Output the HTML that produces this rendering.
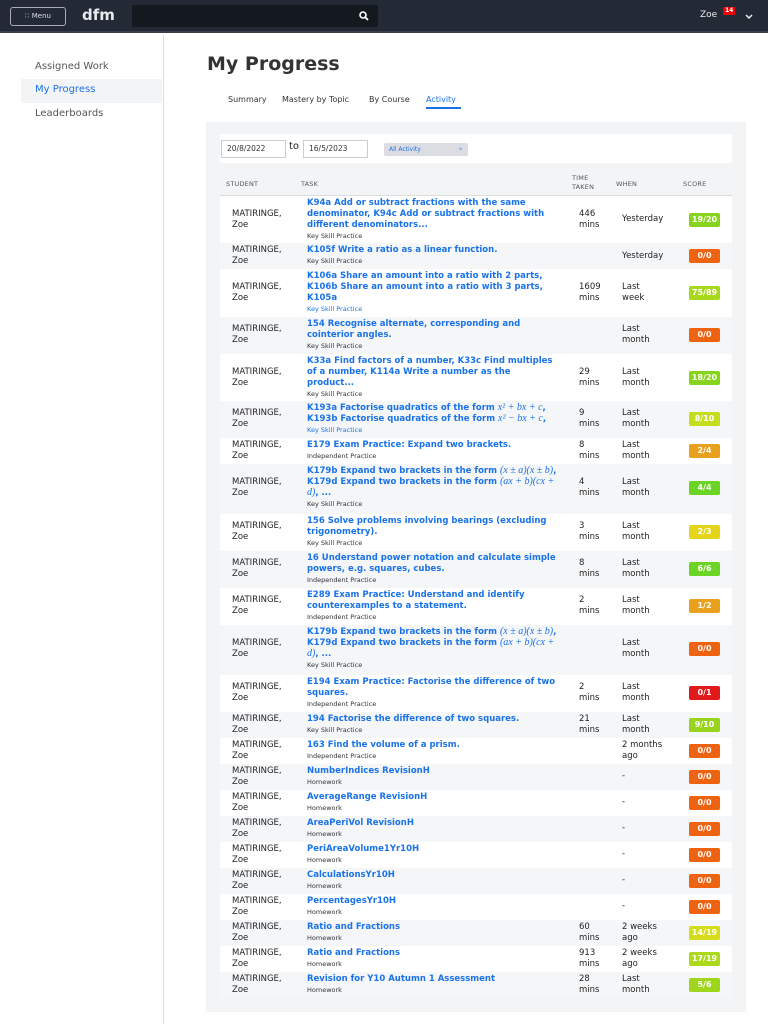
<!DOCTYPE html>
<html><head><meta charset="utf-8"><style>
*{margin:0;padding:0;box-sizing:border-box}
body{width:768px;height:1024px;overflow:hidden;background:#fff;font-family:"DejaVu Sans","Liberation Sans",sans-serif;color:#222;position:relative}
.top{position:absolute;left:0;top:0;width:768px;height:33px;background:#232a36;border-bottom:2px solid #3a3f48}
.menu{position:absolute;left:10px;top:7px;width:56px;height:19px;border:1px solid #aab;border-radius:3px;color:#dde;font-size:7px;line-height:17px;text-align:center}
.logo{position:absolute;left:82px;top:6px;color:#e8eaee;font-size:15px;font-weight:bold}
.search{position:absolute;left:132px;top:5px;width:246px;height:22px;background:#14181f;border-radius:2px}
.zoe{position:absolute;left:700px;top:10px;color:#eee;font-size:9px}
.badge14{position:absolute;left:723px;top:7px;background:#e00;color:#fff;font-size:6px;padding:0 2px;line-height:8px;font-weight:bold}
.side{position:absolute;left:163px;top:35px;width:1px;height:989px;background:#ddd}
.nav{position:absolute;left:35px;font-size:10px;color:#555}
.navsel{position:absolute;left:21px;top:79px;width:141px;height:24px;background:#f3f4f6}
h1{position:absolute;left:207px;top:53px;font-size:19px;color:#333;font-weight:bold}
.tab{position:absolute;top:95px;font-size:8px;color:#333}
.panel{position:absolute;left:206px;top:122px;width:540px;height:890px;background:#f3f4f6}
.filt{position:absolute;left:220px;top:134px;width:512px;height:29px;background:#fff}
.inp{position:absolute;top:140px;width:65px;height:18px;border:1px solid #ccc;font-size:7.5px;line-height:16px;padding-left:5px;color:#333;background:#fff}
.th{position:absolute;font-size:6.5px;color:#555;letter-spacing:.2px}
.row{position:absolute;left:220px;width:512px}
.row.g{background:#f5f6f8}
.row.w{background:#fff}
.st{position:absolute;left:12px;font-size:8.5px;line-height:11px;color:#222}
.tk{position:absolute;left:87px;font-size:8.5px;line-height:11px;color:#1a73e8;font-weight:bold;width:255px}
.tk small{display:block;font-size:6.5px;line-height:11px;color:#333;font-weight:normal}
.tk small.b{color:#1a73e8}
.m{font-family:"Liberation Serif",serif;font-style:italic;font-weight:normal;font-size:10px;line-height:10px}
.tm{position:absolute;left:359px;font-size:8.5px;line-height:11px;color:#222}
.wh{position:absolute;left:402px;font-size:8.5px;line-height:11px;color:#222}
.sc{position:absolute;left:469px;width:31px;height:14px;border-radius:2px;color:#fff;font-size:8px;font-weight:bold;text-align:center;line-height:14px}
</style></head><body>
<div class="top">
<div class="menu">∷ Menu</div>
<div class="logo">dfm</div>
<div class="search"><svg style="position:absolute;left:227px;top:6px" width="10" height="10" viewBox="0 0 10 10"><circle cx="4" cy="4" r="3" stroke="#fff" stroke-width="1.6" fill="none"/><path d="M6.3 6.3L9 9" stroke="#fff" stroke-width="1.8"/></svg></div>
<div class="zoe">Zoe</div><div class="badge14">14</div>
<svg style="position:absolute;left:745px;top:14px" width="8" height="6" viewBox="0 0 8 6"><path d="M1 1l3 3 3-3" stroke="#eee" stroke-width="1.5" fill="none"/></svg>
</div>
<div class="side"></div>
<div class="navsel"></div>
<div class="nav" style="top:61px">Assigned Work</div>
<div class="nav" style="top:84px;color:#1a73e8">My Progress</div>
<div class="nav" style="top:108px">Leaderboards</div>
<h1>My Progress</h1>
<div class="tab" style="left:228px">Summary</div>
<div class="tab" style="left:282px">Mastery by Topic</div>
<div class="tab" style="left:369px">By Course</div>
<div class="tab" style="left:426px;color:#1a73e8">Activity</div>
<div style="position:absolute;left:426px;top:107px;width:35px;height:2px;background:#1a73e8"></div>
<div class="panel"></div>
<div class="filt"></div>
<div class="inp" style="left:221px">20/8/2022</div>
<div style="position:absolute;left:289px;top:141px;font-size:10px">to</div>
<div class="inp" style="left:303px">16/5/2023</div>
<div style="position:absolute;left:384px;top:143px;width:84px;height:13px;background:#dcdde2;border-radius:2px;font-size:6px;color:#1a73e8;line-height:13px;padding-left:5px">All Activity<span style="position:absolute;right:5px">⚬</span></div>
<div class="th" style="left:226px;top:180px">STUDENT</div>
<div class="th" style="left:301px;top:180px">TASK</div>
<div class="th" style="left:572px;top:174px;line-height:9px">TIME<br>TAKEN</div>
<div class="th" style="left:616px;top:180px">WHEN</div>
<div class="th" style="left:683px;top:180px">SCORE</div>
<div style="position:absolute;left:220px;top:195px;width:512px;height:1px;background:#ddd"></div>

<div class="row w" style="top:196px;height:47px"><div class="st" style="top:13px">MATIRINGE,<br>Zoe</div><div class="tk" style="top:2px;width:245px">K94a Add or subtract fractions with the same denominator, K94c Add or subtract fractions with different denominators...<small>Key Skill Practice</small></div><div class="tm" style="top:13px">446<br>mins</div><div class="wh" style="top:18px">Yesterday</div><div class="sc" style="top:17px;background:#86d41c">19/20</div></div>
<div class="row g" style="top:243px;height:26px"><div class="st" style="top:2px">MATIRINGE,<br>Zoe</div><div class="tk" style="top:2px">K105f Write a ratio as a linear function.<small>Key Skill Practice</small></div><div class="wh" style="top:8px">Yesterday</div><div class="sc" style="top:6px;background:#ee6311">0/0</div></div>
<div class="row w" style="top:269px;height:48px"><div class="st" style="top:13px">MATIRINGE,<br>Zoe</div><div class="tk" style="top:2px">K106a Share an amount into a ratio with 2 parts, K106b Share an amount into a ratio with 3 parts, K105a<small class="b">Key Skill Practice</small></div><div class="tm" style="top:13px">1609<br>mins</div><div class="wh" style="top:13px">Last<br>week</div><div class="sc" style="top:17px;background:#a6d81c">75/89</div></div>
<div class="row g" style="top:317px;height:37px"><div class="st" style="top:7px">MATIRINGE,<br>Zoe</div><div class="tk" style="top:2px">154 Recognise alternate, corresponding and cointerior angles.<small>Key Skill Practice</small></div><div class="wh" style="top:7px">Last<br>month</div><div class="sc" style="top:11px;background:#ee6311">0/0</div></div>
<div class="row w" style="top:354px;height:47px"><div class="st" style="top:13px">MATIRINGE,<br>Zoe</div><div class="tk" style="top:2px;width:250px">K33a Find factors of a number, K33c Find multiples of a number, K114a Write a number as the product...<small>Key Skill Practice</small></div><div class="tm" style="top:13px">29<br>mins</div><div class="wh" style="top:13px">Last<br>month</div><div class="sc" style="top:17px;background:#86d41c">18/20</div></div>
<div class="row g" style="top:401px;height:37px"><div class="st" style="top:7px">MATIRINGE,<br>Zoe</div><div class="tk" style="top:2px;width:270px">K193a Factorise quadratics of the form <span class="m">x² + bx + c</span>, K193b Factorise quadratics of the form <span class="m">x² − bx + c</span>,<small class="b">Key Skill Practice</small></div><div class="tm" style="top:7px">9<br>mins</div><div class="wh" style="top:7px">Last<br>month</div><div class="sc" style="top:11px;background:#c4dd1c">8/10</div></div>
<div class="row w" style="top:438px;height:26px"><div class="st" style="top:2px">MATIRINGE,<br>Zoe</div><div class="tk" style="top:2px">E179 Exam Practice: Expand two brackets.<small>Independent Practice</small></div><div class="tm" style="top:2px">8<br>mins</div><div class="wh" style="top:2px">Last<br>month</div><div class="sc" style="top:6px;background:#e9a01c">2/4</div></div>
<div class="row g" style="top:464px;height:50px"><div class="st" style="top:13px">MATIRINGE,<br>Zoe</div><div class="tk" style="top:2px;width:250px">K179b Expand two brackets in the form <span class="m">(x ± a)(x ± b)</span>, K179d Expand two brackets in the form <span class="m">(ax + b)(cx + d)</span>, ...<small>Key Skill Practice</small></div><div class="tm" style="top:13px">4<br>mins</div><div class="wh" style="top:13px">Last<br>month</div><div class="sc" style="top:17px;background:#6bd424">4/4</div></div>
<div class="row w" style="top:514px;height:37px"><div class="st" style="top:7px">MATIRINGE,<br>Zoe</div><div class="tk" style="top:2px">156 Solve problems involving bearings (excluding trigonometry).<small>Key Skill Practice</small></div><div class="tm" style="top:7px">3<br>mins</div><div class="wh" style="top:7px">Last<br>month</div><div class="sc" style="top:11px;background:#e4d41a">2/3</div></div>
<div class="row g" style="top:551px;height:37px"><div class="st" style="top:7px">MATIRINGE,<br>Zoe</div><div class="tk" style="top:2px;width:270px">16 Understand power notation and calculate simple powers, e.g. squares, cubes.<small>Independent Practice</small></div><div class="tm" style="top:7px">8<br>mins</div><div class="wh" style="top:7px">Last<br>month</div><div class="sc" style="top:11px;background:#6bd424">6/6</div></div>
<div class="row w" style="top:588px;height:37px"><div class="st" style="top:7px">MATIRINGE,<br>Zoe</div><div class="tk" style="top:2px">E289 Exam Practice: Understand and identify counterexamples to a statement.<small>Independent Practice</small></div><div class="tm" style="top:7px">2<br>mins</div><div class="wh" style="top:7px">Last<br>month</div><div class="sc" style="top:11px;background:#e9a01c">1/2</div></div>
<div class="row g" style="top:625px;height:50px"><div class="st" style="top:13px">MATIRINGE,<br>Zoe</div><div class="tk" style="top:2px;width:250px">K179b Expand two brackets in the form <span class="m">(x ± a)(x ± b)</span>, K179d Expand two brackets in the form <span class="m">(ax + b)(cx + d)</span>, ...<small>Key Skill Practice</small></div><div class="wh" style="top:13px">Last<br>month</div><div class="sc" style="top:17px;background:#ee6311">0/0</div></div>
<div class="row w" style="top:675px;height:37px"><div class="st" style="top:7px">MATIRINGE,<br>Zoe</div><div class="tk" style="top:2px;width:270px">E194 Exam Practice: Factorise the difference of two squares.<small>Independent Practice</small></div><div class="tm" style="top:7px">2<br>mins</div><div class="wh" style="top:7px">Last<br>month</div><div class="sc" style="top:11px;background:#e0191b">0/1</div></div>
<div class="row g" style="top:712px;height:26px"><div class="st" style="top:2px">MATIRINGE,<br>Zoe</div><div class="tk" style="top:2px">194 Factorise the difference of two squares.<small>Key Skill Practice</small></div><div class="tm" style="top:2px">21<br>mins</div><div class="wh" style="top:2px">Last<br>month</div><div class="sc" style="top:6px;background:#98d41c">9/10</div></div>
<div class="row w" style="top:738px;height:26px"><div class="st" style="top:2px">MATIRINGE,<br>Zoe</div><div class="tk" style="top:2px">163 Find the volume of a prism.<small>Independent Practice</small></div><div class="wh" style="top:2px">2 months<br>ago</div><div class="sc" style="top:6px;background:#ee6311">0/0</div></div>
<div class="row g" style="top:764px;height:26px"><div class="st" style="top:2px">MATIRINGE,<br>Zoe</div><div class="tk" style="top:2px">NumberIndices RevisionH<small>Homework</small></div><div class="wh" style="top:7px">-</div><div class="sc" style="top:6px;background:#ee6311">0/0</div></div>
<div class="row w" style="top:790px;height:26px"><div class="st" style="top:2px">MATIRINGE,<br>Zoe</div><div class="tk" style="top:2px">AverageRange RevisionH<small>Homework</small></div><div class="wh" style="top:7px">-</div><div class="sc" style="top:6px;background:#ee6311">0/0</div></div>
<div class="row g" style="top:816px;height:26px"><div class="st" style="top:2px">MATIRINGE,<br>Zoe</div><div class="tk" style="top:2px">AreaPeriVol RevisionH<small>Homework</small></div><div class="wh" style="top:7px">-</div><div class="sc" style="top:6px;background:#ee6311">0/0</div></div>
<div class="row w" style="top:842px;height:26px"><div class="st" style="top:2px">MATIRINGE,<br>Zoe</div><div class="tk" style="top:2px">PeriAreaVolume1Yr10H<small>Homework</small></div><div class="wh" style="top:7px">-</div><div class="sc" style="top:6px;background:#ee6311">0/0</div></div>
<div class="row g" style="top:868px;height:26px"><div class="st" style="top:2px">MATIRINGE,<br>Zoe</div><div class="tk" style="top:2px">CalculationsYr10H<small>Homework</small></div><div class="wh" style="top:7px">-</div><div class="sc" style="top:6px;background:#ee6311">0/0</div></div>
<div class="row w" style="top:894px;height:26px"><div class="st" style="top:2px">MATIRINGE,<br>Zoe</div><div class="tk" style="top:2px">PercentagesYr10H<small>Homework</small></div><div class="wh" style="top:7px">-</div><div class="sc" style="top:6px;background:#ee6311">0/0</div></div>
<div class="row g" style="top:920px;height:26px"><div class="st" style="top:2px">MATIRINGE,<br>Zoe</div><div class="tk" style="top:2px">Ratio and Fractions<small>Homework</small></div><div class="tm" style="top:2px">60<br>mins</div><div class="wh" style="top:2px">2 weeks<br>ago</div><div class="sc" style="top:6px;background:#d4dc1c">14/19</div></div>
<div class="row w" style="top:946px;height:26px"><div class="st" style="top:2px">MATIRINGE,<br>Zoe</div><div class="tk" style="top:2px">Ratio and Fractions<small>Homework</small></div><div class="tm" style="top:2px">913<br>mins</div><div class="wh" style="top:2px">2 weeks<br>ago</div><div class="sc" style="top:6px;background:#acd91c">17/19</div></div>
<div class="row g" style="top:972px;height:26px"><div class="st" style="top:2px">MATIRINGE,<br>Zoe</div><div class="tk" style="top:2px">Revision for Y10 Autumn 1 Assessment<small>Homework</small></div><div class="tm" style="top:2px">28<br>mins</div><div class="wh" style="top:2px">Last<br>month</div><div class="sc" style="top:6px;background:#9ed61e">5/6</div></div>
</body></html>
